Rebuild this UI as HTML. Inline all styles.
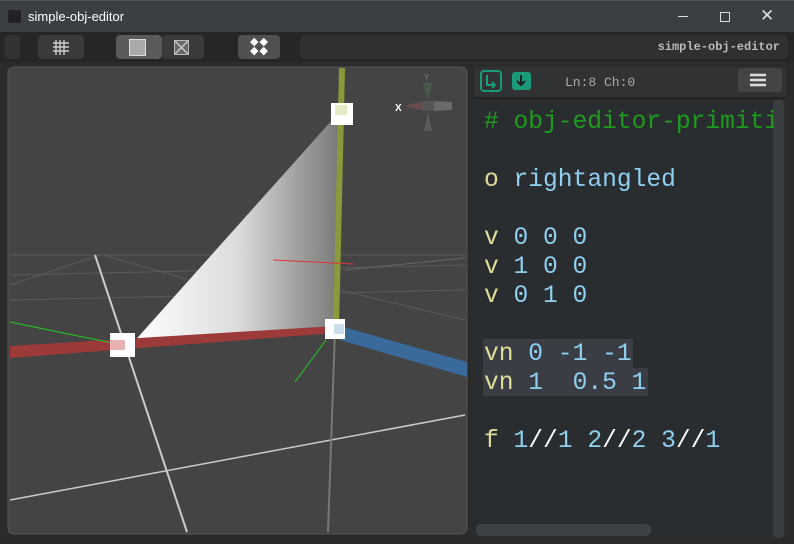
<!DOCTYPE html>
<html><head><style>
*{margin:0;padding:0;box-sizing:border-box}
body{width:794px;height:544px;background:#2b2b2b;position:relative;overflow:hidden;font-family:"Liberation Sans",sans-serif}
.tb{position:absolute;left:0;top:0;width:794px;height:32px;background:#3b3f43;border-top:1px solid #555}
.tb .t{position:absolute;left:28px;top:8px;color:#fff;font-size:13px}
.tb .ic{position:absolute;left:8px;top:9px;width:13px;height:13px;background:#222;border-radius:2px}
.tool{position:absolute;left:0;top:32px;width:794px;height:30px;background:#262626}
.b{position:absolute;top:3px;height:24px;background:#3a3a3a;border-radius:4px}
.code{position:absolute;left:484px;top:108px;font-family:"Liberation Mono",monospace;font-size:24.6px;line-height:29px;white-space:pre;color:#8fcff0}
.k{color:#e0dc9a}
</style></head><body>
<div class="tb"><div class="ic"></div><div class="t">simple-obj-editor</div>
<div style="position:absolute;left:678px;top:15px;width:10px;height:1px;background:#ddd"></div>
<div style="position:absolute;left:720px;top:11px;width:10px;height:10px;border:1px solid #ddd"></div>
<div style="position:absolute;left:760px;top:5px;color:#ddd;font-size:17px">✕</div>
</div>
<div class="tool">
<div class="b" style="left:5px;width:15px;background:#333"></div>
<div class="b" style="left:38px;width:46px"></div>
<svg style="position:absolute;left:52px;top:7px" width="18" height="17"><path d="M4 1v15M8 1v15M12 1v15M1 4h16M1 8h16M1 12h16" stroke="#ccc" stroke-width="1.4"/></svg>
<div class="b" style="left:116px;width:46px;background:#5a5a5a"></div>
<div style="position:absolute;left:129px;top:7px;width:17px;height:17px;background:#aaa;border:1px solid #ddd"></div>
<div class="b" style="left:162px;width:42px"></div>
<div style="position:absolute;left:174px;top:8px;width:15px;height:15px;border:1px solid #bbb;background:linear-gradient(45deg,transparent 46%,#bbb 46% 54%,transparent 54%),linear-gradient(-45deg,transparent 46%,#bbb 46% 54%,transparent 54%),#666"></div>
<div class="b" style="left:238px;width:42px;background:#505050"></div>
<div style="position:absolute;left:250px;top:6px;color:#fff;font-size:11px;line-height:9px;letter-spacing:1px">◆◆<br>◆◆</div>
<div class="b" style="left:300px;width:488px;background:#303030"></div>
<div style="position:absolute;right:14px;top:8px;color:#bbb;font:bold 12px 'Liberation Mono',monospace">simple-obj-editor</div>
</div>
<svg style="position:absolute;left:0;top:0" width="794" height="544">
<defs><linearGradient id="g" x1="0" x2="1"><stop offset="0" stop-color="#fff"/><stop offset="0.5" stop-color="#ddd"/><stop offset="1" stop-color="#777"/></linearGradient></defs>
<rect x="8" y="67" width="459" height="467" rx="6" fill="#444" stroke="#555"/>
<g stroke="#5a5a5a" stroke-width="1">
<line x1="10" y1="255" x2="465" y2="255"/><line x1="10" y1="275" x2="465" y2="265"/><line x1="10" y1="300" x2="465" y2="290"/>
<line x1="10" y1="285" x2="100" y2="255"/><line x1="100" y1="254" x2="190" y2="280"/><line x1="340" y1="290" x2="465" y2="320"/>
</g>
<line x1="95" y1="255" x2="187" y2="532" stroke="#ccc" stroke-width="2"/>
<line x1="10" y1="500" x2="465" y2="415" stroke="#ccc" stroke-width="1.5"/>
<line x1="335" y1="330" x2="328" y2="532" stroke="#777" stroke-width="2"/>
<line x1="345" y1="270" x2="465" y2="258" stroke="#666"/>
<polygon points="131,345 341,110 333,330" fill="url(#g)"/>
<line x1="342" y1="68" x2="336" y2="330" stroke="#8a9a3a" stroke-width="6"/>
<polygon points="10,346 335,326 335,333 10,358" fill="#9c3a3a"/>
<polygon points="340,326 467,362 467,377 340,340" fill="#3a6a9a"/>
<line x1="10" y1="322" x2="122" y2="345" stroke="#2c2" stroke-width="1"/>
<line x1="326" y1="340" x2="295" y2="382" stroke="#2c2" stroke-width="1"/>
<line x1="273" y1="260" x2="354" y2="264" stroke="#d33" stroke-width="1"/>
<rect x="110" y="333" width="25" height="24" fill="#fff"/><rect x="110" y="340" width="15" height="10" fill="#e8b0b0"/>
<rect x="331" y="103" width="22" height="22" fill="#fff"/><rect x="335" y="105" width="12" height="10" fill="#e3ecc5"/>
<rect x="325" y="319" width="20" height="20" fill="#fff"/><rect x="334" y="324" width="10" height="10" fill="#cde"/>
<text x="395" y="111" fill="#fff" font-size="10" font-weight="bold" font-family="Liberation Sans">X</text>
<text x="424" y="80" fill="#777" font-size="8" font-family="Liberation Sans">Y</text>
<polygon points="404,106 424,101 424,111" fill="#6a4a4a"/><polygon points="452,102 432,101 432,111 452,110" fill="#6a6a6a"/>
<polygon points="423,83 432,83 428,100" fill="#4a5a4a"/><polygon points="424,131 432,131 428,112" fill="#5a5a5a"/>
<rect x="422" y="101" width="12" height="10" fill="#555"/>
<rect x="474" y="67" width="312" height="473" rx="5" fill="#2a2d30"/>
<rect x="474" y="67" width="312" height="31" fill="#303234"/>
<rect x="474" y="97" width="312" height="2" fill="#222"/>
<rect x="773" y="100" width="11" height="438" rx="4" fill="#3a3d40"/>
<rect x="476" y="524" width="175" height="12" rx="5" fill="#3d4044"/>
<rect x="481" y="71" width="20" height="20" rx="3" fill="none" stroke="#1a9a7a" stroke-width="2"/>
<path d="M487 75v10h8m-3-3l3 3-3 3" stroke="#1a9a7a" stroke-width="2" fill="none"/>
<rect x="512" y="72" width="19" height="18" rx="3" fill="#1a9a7a"/>
<path d="M521 75v10m-4-4l4 4 4-4" stroke="#222" stroke-width="2" fill="none"/>
<rect x="738" y="68" width="44" height="24" rx="4" fill="#444"/>
<path d="M750 75h16M750 80h16M750 85h16" stroke="#ddd" stroke-width="2.5"/>
<text x="565" y="86" fill="#aaa" font-size="13" font-family="Liberation Mono">Ln:8 Ch:0</text>
<rect x="483" y="339" width="150" height="29" fill="#3a3e44"/>
<rect x="483" y="368" width="165" height="28" fill="#3a3e44"/>
</svg>
<div class="code" style="width:290px;overflow:hidden"><span style="color:#1e9a1e"># obj-editor-primitive</span>

<span class="k">o</span> rightangled

<span class="k">v</span> 0 0 0
<span class="k">v</span> 1 0 0
<span class="k">v</span> 0 1 0

<span class="k">vn</span> 0 -1 -1
<span class="k">vn</span> 1  0.5 1

<span class="k">f</span> 1<span style="color:#fff">//</span>1 2<span style="color:#fff">//</span>2 3<span style="color:#fff">//</span>1</div>
</body></html>
